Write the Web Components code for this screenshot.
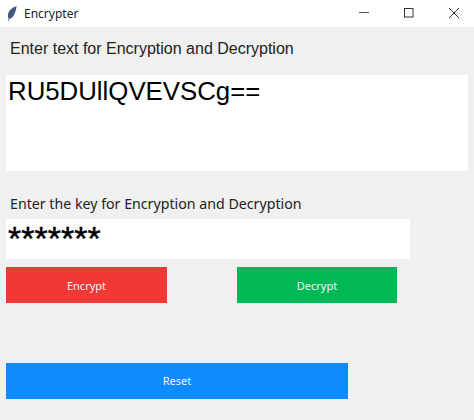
<!DOCTYPE html>
<html>
<head>
<meta charset="utf-8">
<title>Encrypter</title>
<style>
  html, body { margin: 0; padding: 0; background: #f0f0f0; overflow: hidden; }
</style>
</head>
<body>
<app-window>
  <title-bar slot="bar">Encrypter</title-bar>
  <form-label style="--label-font: 'Liberation Sans', sans-serif; --label-size: 16px; height: 48px; --label-pad-b: 4px;">Enter text for Encryption and Decryption</form-label>
  <text-box style="--box-w: 462px; --box-h: 96px; --box-size: 25.8px; --box-lh: 32px;">RU5DUllQVEVSCg==</text-box>
  <form-label style="--label-font: 'Noto Sans', sans-serif; --label-size: 14.2px; height: 48px; --label-pad: 16px;">Enter the key for Encryption and Decryption</form-label>
  <text-box style="--box-w: 404px; --box-h: 40px; --box-size: 34px; --box-lh: 38px; --box-stroke: .4px;">*******</text-box>
  <button-row>
    <action-button style="--btn-bg: #f03835; --btn-w: 161px;">Encrypt</action-button>
    <action-button style="--btn-bg: #00b956; --btn-w: 160px;">Decrypt</action-button>
  </button-row>
  <action-button style="--btn-bg: #0f8aff; --btn-w: 342px; --btn-pb: 2px; margin-top: 60px;">Reset</action-button>
</app-window>

<script>
class AppWindow extends HTMLElement {
  constructor() {
    super();
    this.attachShadow({mode: "open"}).innerHTML = `
      <style>
        :host { display: block; width: 474px; height: 420px; background: #f0f0f0; }
        .content { display: flex; flex-direction: column; align-items: flex-start; padding-left: 6px; }
      </style>
      <slot name="bar"></slot>
      <div class="content"><slot></slot></div>
    `;
  }
}

class TitleBar extends HTMLElement {
  constructor() {
    super();
    this.attachShadow({mode: "open"}).innerHTML = `
      <style>
        :host { display: flex; align-items: center; height: 27px; background: #fff; color: #222;
                font: 12px "Noto Sans", sans-serif; }
        .feather { margin-left: 7px; width: 10px; height: 15px; flex: none; }
        .name { margin-left: 7px; flex: 1; }
        .controls { display: flex; }
        .controls svg { width: 46px; height: 27px; display: block; }
      </style>
      <svg class="feather" viewBox="0 0 10 15">
        <path d="M9.6 .3C5.6 1.2 1.4 4.4 .9 9 .7 10.8 1 12 1.8 12.4L1.2 14.6 2 14.8 2.9 12.6C6 12.4 8.8 6.5 9.6 .3Z" fill="#3f587c"/>
      </svg>
      <span class="name"><slot></slot></span>
      <div class="controls">
        <svg viewBox="0 0 46 27"><path d="M23 12.5H33" stroke="#555" fill="none"/></svg>
        <svg viewBox="0 0 46 27"><rect x="22.5" y="8.5" width="8.5" height="8.5" stroke="#333" fill="none"/></svg>
        <svg viewBox="0 0 46 27"><path d="M21 8L31 18M31 8L21 18" stroke="#333" fill="none"/></svg>
      </div>
    `;
  }
}

class FormLabel extends HTMLElement {
  constructor() {
    super();
    this.attachShadow({mode: "open"}).innerHTML = `
      <style>
        :host { display: flex; align-items: center; box-sizing: border-box; color: #222;
                padding: var(--label-pad, 0) 0 var(--label-pad-b, 0) 4px;
                font-family: var(--label-font); font-size: var(--label-size); white-space: nowrap; }
      </style>
      <slot></slot>
    `;
  }
}

class TextBox extends HTMLElement {
  constructor() {
    super();
    this.attachShadow({mode: "open"}).innerHTML = `
      <style>
        :host { display: block; box-sizing: border-box; background: #fff; color: #000;
                width: var(--box-w); height: var(--box-h); padding-left: 2px;
                font: var(--box-size)/var(--box-lh) "Liberation Sans", sans-serif;
                -webkit-text-stroke: var(--box-stroke, 0);
                white-space: nowrap; overflow: hidden; }
      </style>
      <slot></slot>
    `;
  }
}

class ButtonRow extends HTMLElement {
  constructor() {
    super();
    this.attachShadow({mode: "open"}).innerHTML = `
      <style>
        :host { display: flex; gap: 70px; margin-top: 8px; }
      </style>
      <slot></slot>
    `;
  }
}

class ActionButton extends HTMLElement {
  constructor() {
    super();
    this.attachShadow({mode: "open"}).innerHTML = `
      <style>
        :host { display: flex; align-items: center; justify-content: center; box-sizing: border-box; height: 36px;
                padding-bottom: var(--btn-pb, 0);
                width: var(--btn-w); background: var(--btn-bg); color: #f4f4f4;
                font: 11px "Noto Sans", sans-serif; }
      </style>
      <slot></slot>
    `;
  }
}

customElements.define("app-window", AppWindow);
customElements.define("title-bar", TitleBar);
customElements.define("form-label", FormLabel);
customElements.define("text-box", TextBox);
customElements.define("button-row", ButtonRow);
customElements.define("action-button", ActionButton);
</script>
</body>
</html>
